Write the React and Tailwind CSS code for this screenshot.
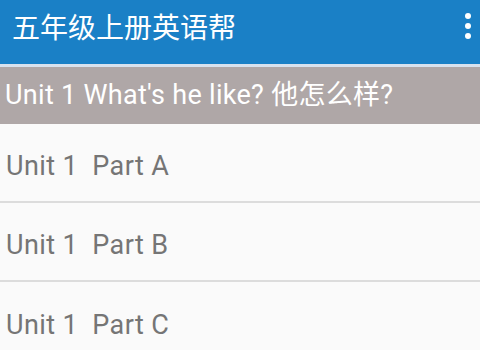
export default function App() {
  const parts = ["Part A", "Part B", "Part C"];

  return (
    <div className="h-[350px] w-[480px] overflow-hidden bg-[#fafafa] font-['Roboto','Noto_Sans_CJK_SC',sans-serif]">
      {/* toolbar */}
      <div className="flex h-[64px] items-center justify-between bg-[#1a80c6] pb-[12px] pl-[12px] pr-[9px]">
        <h1 className="text-[28px] leading-none text-white font-['Noto_Sans_CJK_SC',sans-serif]">
          五年级上册英语帮
        </h1>
        <div className="flex flex-col items-center gap-[4px]">
          <span className="h-[6px] w-[6px] rounded-full bg-white" />
          <span className="h-[6px] w-[6px] rounded-full bg-white" />
          <span className="h-[6px] w-[6px] rounded-full bg-white" />
        </div>
      </div>
      <div className="h-[3px] bg-[#d8e2ee]" />

      {/* unit header */}
      <div className="flex h-[57px] items-center bg-[#afa7a7] pl-[5px]">
        <span className="text-[27px] tracking-[0.3px] text-white">
          Unit 1 What's he like? 他怎么样?
        </span>
      </div>

      {/* list */}
      <ul>
        {parts.map((p, i) => (
          <li
            key={p}
            className={
              "flex h-[79px] items-center pl-[6px] pt-[7px] text-[27px] tracking-[0.4px] text-[#757575] " +
              (i < parts.length - 1 ? "border-b-2 border-[#dcdcdc]" : "")
            }
          >
            <span className="whitespace-pre">Unit 1  {p}</span>
          </li>
        ))}
      </ul>
    </div>
  );
}
